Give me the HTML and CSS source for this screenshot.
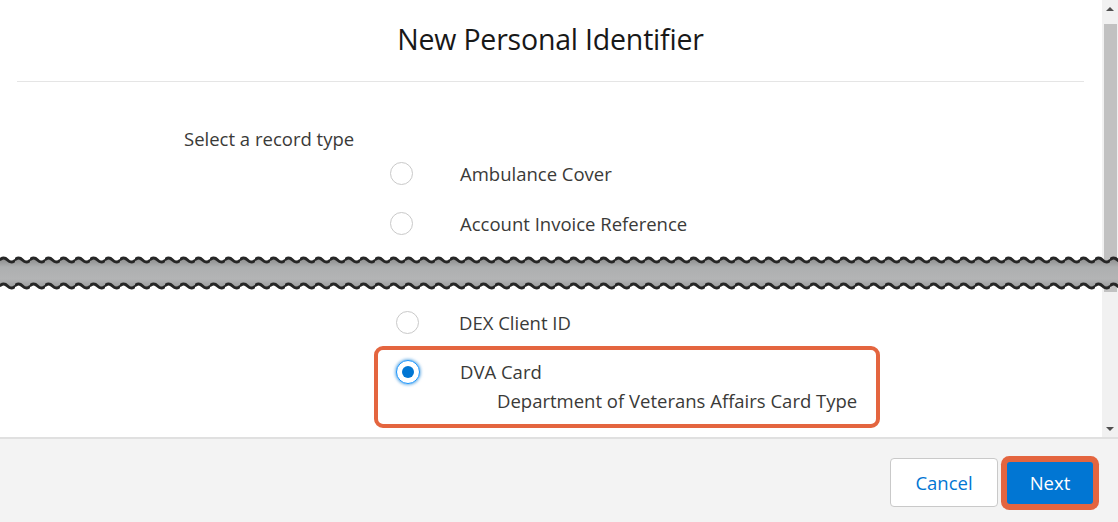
FILE: index.html
```html
<!DOCTYPE html>
<html lang="en">
<head>
<meta charset="utf-8">
<title>New Personal Identifier</title>
<link rel="stylesheet" href="styles.css">
</head>
<body>
<div class="modal">
  <div class="body">
    <div class="content">
      <header class="header">
        <h1 class="title">New Personal Identifier</h1>
      </header>
      <div class="form">
        <div class="field-label">Select a record type</div>
        <div class="group group-top">
          <label class="option"><span class="radio"></span><span class="opt-text">Ambulance Cover</span></label>
          <label class="option"><span class="radio"></span><span class="opt-text">Account Invoice Reference</span></label>
        </div>
        <div class="group group-bottom">
          <label class="option option-b"><span class="radio"></span><span class="opt-text-b">DEX Client ID</span></label>
          <label class="option-selected">
            <span class="radio radio-checked"></span>
            <span class="opt-col">
              <span class="opt-text-b">DVA Card</span>
              <span class="opt-desc">Department of Veterans Affairs Card Type</span>
            </span>
          </label>
        </div>
      </div>
    </div>
    <div class="scrollbar">
      <div class="sb-btn"><span class="tri-up"></span></div>
      <div class="sb-thumb"></div>
      <div class="sb-fill"></div>
      <div class="sb-btn"><span class="tri-down"></span></div>
    </div>
  </div>
  <footer class="footer">
    <button class="btn btn-neutral">Cancel</button>
    <button class="btn btn-brand">Next</button>
  </footer>
  <svg class="tear" width="1118" height="36" viewBox="0 0 1118 36" aria-hidden="true">
    <defs>
      <linearGradient id="g" x1="0" y1="0" x2="0" y2="1">
        <stop offset="0" stop-color="#8a8a8a"/>
        <stop offset="0.3" stop-color="#adafb0"/>
        <stop offset="0.7" stop-color="#b3b4b5"/>
        <stop offset="1" stop-color="#9a9b9c"/>
      </linearGradient>
      <pattern id="p" x="0" y="0" width="15" height="36" patternUnits="userSpaceOnUse">
        <path d="M0,5 Q3.75,1 7.5,5 T15,5 L15,31 Q11.25,35 7.5,31 T0,31 Z" fill="url(#g)"/>
        <path d="M-0.5,5 Q3.75,1 7.5,5 T15.5,5" fill="none" stroke="#262626" stroke-width="3"/>
        <path d="M-0.5,31 Q3.75,27 7.5,31 T15.5,31" fill="none" stroke="#262626" stroke-width="3"/>
      </pattern>
    </defs>
    <rect x="0" y="0" width="1118" height="36" fill="url(#p)"/>
  </svg>
</div>
</body>
</html>
```
FILE: styles.css
```css
* { box-sizing: border-box; }
html, body { margin: 0; padding: 0; }
body {
  font-family: "Open Sans", "Noto Sans", sans-serif;
  color: #3a3a38;
  background: #ffffff;
}
.modal {
  position: relative;
  width: 1118px;
  height: 522px;
  display: flex;
  flex-direction: column;
  overflow: hidden;
}
.body {
  height: 437px;
  flex: none;
  display: flex;
  background: #ffffff;
}
.content {
  flex: 1;
  display: flex;
  flex-direction: column;
  overflow: hidden;
}
.header {
  flex: none;
  height: 82px;
  margin: 0 18px 0 17px;
  border-bottom: 1px solid #e5e5e5;
  display: flex;
  align-items: center;
  justify-content: center;
  padding-bottom: 4px;
}
.title {
  margin: 0;
  font-weight: 400;
  font-size: 28.5px;
  color: #181818;
  letter-spacing: -0.2px;
  white-space: nowrap;
}
.form {
  flex: none;
  display: flex;
  flex-direction: column;
}
.field-label {
  margin: 47px 0 0 184px;
  font-size: 18.5px;
  line-height: 20px;
  height: 20px;
  white-space: nowrap;
}
.group { display: flex; flex-direction: column; }
.group-top { padding-left: 390px; margin-top: -1px; }
.group-bottom { padding-left: 374px; margin-top: 49px; }
.option {
  height: 50px;
  flex: none;
  display: flex;
  align-items: center;
  font-size: 18.5px;
  white-space: nowrap;
}
.option-b { padding-left: 22px; }
.radio {
  width: 23px;
  height: 23px;
  flex: none;
  border-radius: 50%;
  border: 1px solid #c9c9c9;
  background: #ffffff;
  display: flex;
  align-items: center;
  justify-content: center;
}
.opt-text { margin-left: 47px; }
.opt-text-b { margin-left: 40px; }
.option-selected {
  flex: none;
  margin-top: -1px;
  width: 506px;
  border: 4px solid #e4653f;
  border-radius: 9px;
  padding: 10px 16px 11px 18px;
  display: flex;
  align-items: flex-start;
  font-size: 18.5px;
  white-space: nowrap;
}
.radio-checked {
  width: 24px;
  height: 24px;
  border: 1px solid #1b96ff;
  box-shadow: 0 0 3px 1px rgba(1, 118, 211, 0.55);
}
.radio-checked::after {
  content: "";
  width: 12px;
  height: 12px;
  border-radius: 50%;
  background: #0176d3;
}
.opt-col {
  display: flex;
  flex-direction: column;
  line-height: 24px;
}
.opt-desc { margin-left: 77px; margin-top: 5px; }
.scrollbar {
  width: 16px;
  flex: none;
  background: #f1f1f1;
  display: flex;
  flex-direction: column;
}
.sb-btn {
  height: 17px;
  flex: none;
  display: flex;
  align-items: center;
  justify-content: center;
}
.tri-up {
  width: 0; height: 0;
  border-left: 4px solid transparent;
  border-right: 4px solid transparent;
  border-bottom: 4px solid #505050;
}
.tri-down {
  width: 0; height: 0;
  border-left: 4px solid transparent;
  border-right: 4px solid transparent;
  border-top: 4px solid #505050;
}
.sb-thumb {
  height: 268px;
  flex: none;
  margin: 7px 1px 0 2px;
  background: #c1c1c1;
}
.sb-fill { flex: 1; }
.footer {
  flex: 1;
  background: #f3f3f3;
  border-top: 2px solid #e0e0e0;
  display: flex;
  justify-content: flex-end;
  align-items: center;
  padding: 4px 25px 0 0;
  gap: 9px;
}
.btn {
  font-family: "Open Sans", "Noto Sans", sans-serif;
  font-size: 18.5px;
  border-radius: 4px;
  cursor: pointer;
}
.btn-neutral {
  width: 108px;
  height: 49px;
  background: #ffffff;
  border: 1px solid #c9c9c9;
  color: #0176d3;
}
.btn-brand {
  width: 86px;
  height: 42px;
  background: #0176d3;
  border: none;
  color: #ffffff;
  box-shadow: 0 0 0 6px #e4653f;
  border-radius: 3px;
}
.tear {
  position: absolute;
  left: 0;
  top: 255px;
  display: block;
}
```
